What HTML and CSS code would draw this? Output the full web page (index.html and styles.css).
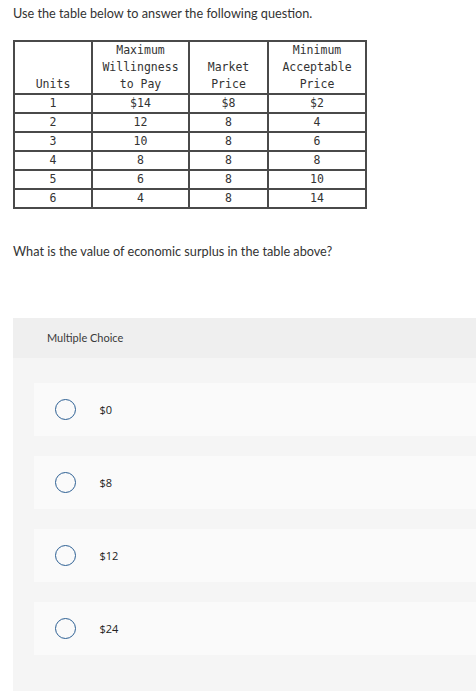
FILE: index.html
```html
<!DOCTYPE html>
<html>
<head>
<meta charset="utf-8">
<link rel="stylesheet" href="styles.css">
</head>
<body>
<div class="page">
  <p class="prompt">Use the table below to answer the following question.</p>
  <table class="data">
    <colgroup>
      <col class="c1"><col class="c2"><col class="c3"><col class="c4">
    </colgroup>
    <thead>
      <tr>
        <th>Units</th>
        <th>Maximum<br>Willingness<br>to Pay</th>
        <th>Market<br>Price</th>
        <th>Minimum<br>Acceptable<br>Price</th>
      </tr>
    </thead>
    <tbody>
      <tr><td>1</td><td>$14</td><td>$8</td><td>$2</td></tr>
      <tr><td>2</td><td>12</td><td>8</td><td>4</td></tr>
      <tr><td>3</td><td>10</td><td>8</td><td>6</td></tr>
      <tr><td>4</td><td>8</td><td>8</td><td>8</td></tr>
      <tr><td>5</td><td>6</td><td>8</td><td>10</td></tr>
      <tr><td>6</td><td>4</td><td>8</td><td>14</td></tr>
    </tbody>
  </table>
  <p class="question">What is the value of economic surplus in the table above?</p>
  <section class="mc">
    <div class="mc-head">Multiple Choice</div>
    <div class="mc-body">
      <label class="option"><span class="radio"></span><span class="opt-text">$0</span></label>
      <label class="option"><span class="radio"></span><span class="opt-text">$8</span></label>
      <label class="option"><span class="radio"></span><span class="opt-text">$12</span></label>
      <label class="option"><span class="radio"></span><span class="opt-text">$24</span></label>
    </div>
  </section>
</div>
</body>
</html>
```

FILE: styles.css
```css
html, body {
  margin: 0;
  padding: 0;
  background: #ffffff;
}
.page {
  padding-left: 13px;
  font-family: Lato, "Open Sans", sans-serif;
  color: #333333;
}
.prompt {
  margin: 0;
  padding-top: 5px;
  font-size: 12.7px;
  line-height: 16px;
  height: 35px;
}
.data {
  border-collapse: collapse;
  border: 2px solid #4a4a4a;
  font-family: "DejaVu Sans Mono", "Liberation Mono", monospace;
  font-size: 11.5px;
  color: #333333;
  table-layout: fixed;
  width: 352px;
}
.c1 { width: 78px; }
.c2 { width: 97px; }
.c3 { width: 79px; }
.c4 { width: 98px; }
.data th, .data td {
  border: 2px solid #4a4a4a;
  text-align: center;
  font-weight: normal;
  padding: 0;
}
.data th {
  vertical-align: bottom;
  line-height: 17px;
}
.data td {
  line-height: 17px;
}
.question {
  margin: 0;
  padding-top: 34px;
  font-size: 12.7px;
  line-height: 16px;
  height: 75px;
}
.mc {
  background: #f5f5f5;
  font-family: "Open Sans", sans-serif;
  height: 380px;
}
.mc-head {
  background: #efefef;
  height: 40px;
  line-height: 40px;
  padding-left: 34px;
  font-family: Lato, "Open Sans", sans-serif;
  font-size: 11px;
  color: #3a3a3a;
}
.mc-body {
  padding: 25px 0 0 21px;
  display: flex;
  flex-direction: column;
  gap: 20px;
}
.option {
  background: #fafafa;
  height: 53px;
  display: flex;
  align-items: center;
}
.radio {
  width: 19px;
  height: 19px;
  border: 1.5px solid #2c5f93;
  border-radius: 50%;
  margin-left: 20.5px;
  box-sizing: content-box;
}
.opt-text {
  margin-left: 24px;
  font-size: 11px;
  color: #222222;
}
```
